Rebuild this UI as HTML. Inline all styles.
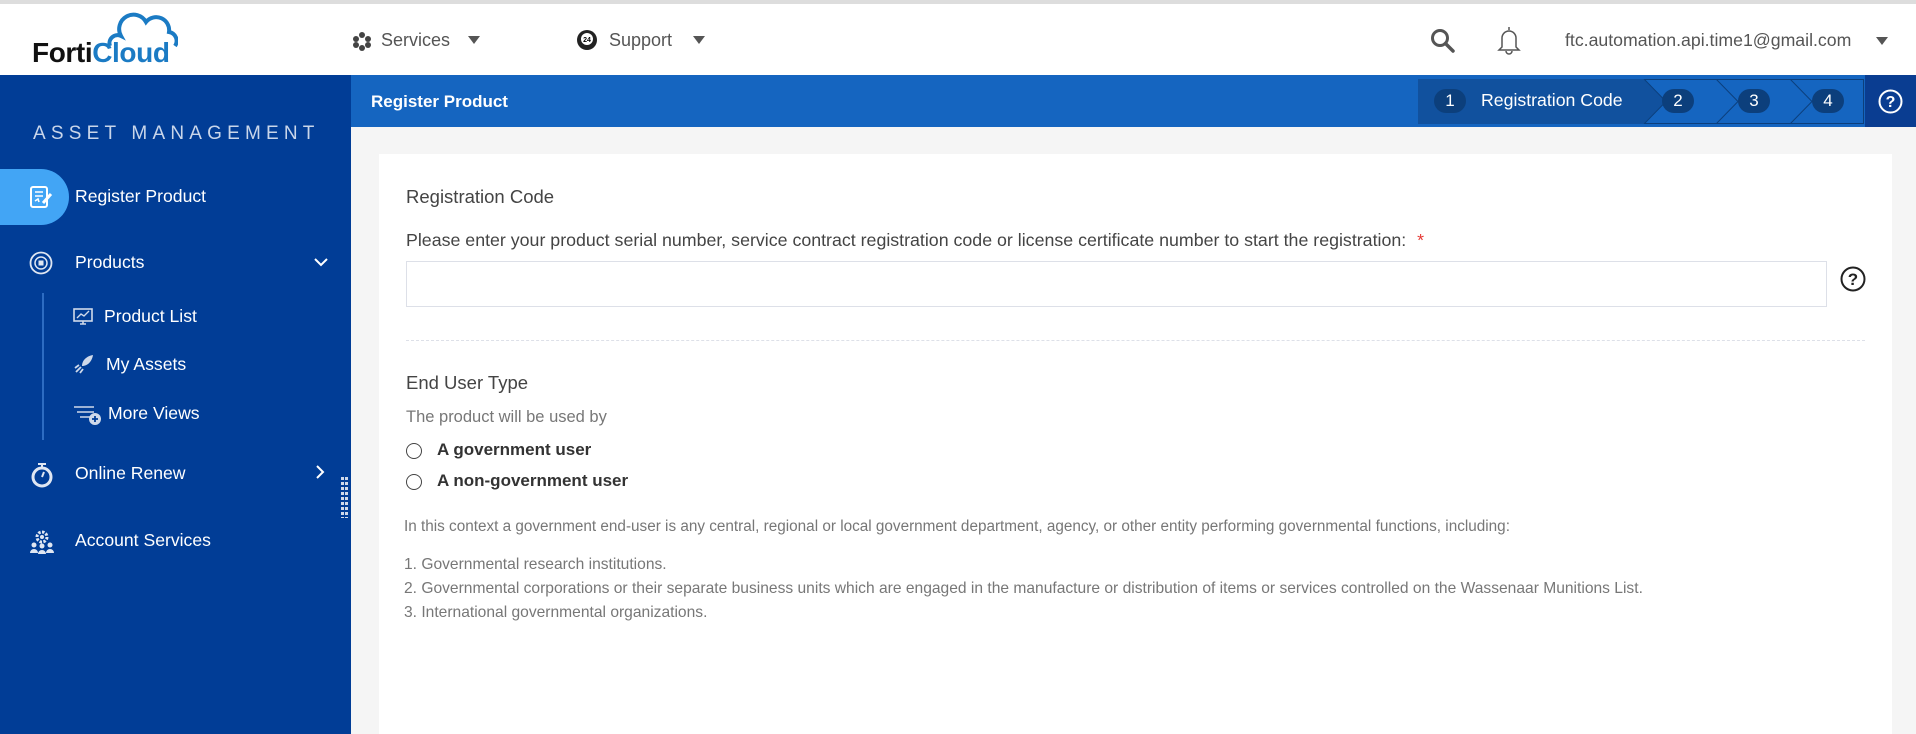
<!DOCTYPE html>
<html><head><meta charset="utf-8"><style>
*{margin:0;padding:0;box-sizing:border-box}
body{width:1916px;height:734px;overflow:hidden;font-family:"Liberation Sans",sans-serif;background:#f5f5f5;position:relative}
.a{position:absolute;white-space:nowrap}
#hdr{left:0;top:0;width:1916px;height:75px;background:#fff;border-top:4px solid #ddd}
#side{left:0;top:75px;width:351px;height:659px;background:#013d96}
#bar{left:351px;top:75px;width:1565px;height:52px;background:#1565c0}
.w{color:#fff}
.tri{width:0;height:0;border-left:6px solid transparent;border-right:6px solid transparent;border-top:8px solid #555}
.nav{color:#fff;font-size:17.6px}
.circ{width:32px;height:24px;border-radius:12px;background:#0c3f7c;color:#fff;font-size:17px;text-align:center;line-height:24px}
</style></head><body>
<div class="a" id="hdr"></div>
<!-- logo -->
<svg class="a" style="left:106px;top:12px" width="72" height="36" viewBox="0 0 72 36"><path d="M4 34 A8 8 0 0 1 15 24 A14 14 0 0 1 40 10 A13 13 0 0 1 63 20 A9 9 0 0 1 69 34" fill="none" stroke="#1b7bc4" stroke-width="4"/></svg>
<div class="a" style="left:32px;top:37px;font-size:28px;font-weight:bold;letter-spacing:-0.4px;color:#111">Forti<span style="color:#1b7bc4">Cloud</span></div>
<!-- services -->
<svg class="a" style="left:352px;top:31px" width="20" height="20" viewBox="0 0 20 20"><g fill="#444"><circle cx="10" cy="4" r="3"/><circle cx="4" cy="8" r="3"/><circle cx="16" cy="8" r="3"/><circle cx="4" cy="14" r="3"/><circle cx="16" cy="14" r="3"/><circle cx="10" cy="17" r="3"/></g></svg>
<div class="a" style="left:381px;top:30px;font-size:18px;color:#555">Services</div>
<div class="a tri" style="left:468px;top:36px"></div>
<svg class="a" style="left:576px;top:29px" width="22" height="22" viewBox="0 0 22 22"><circle cx="11" cy="11" r="10" fill="#222"/><circle cx="11" cy="10" r="6" fill="#fff"/><text x="11" y="13" font-size="7" text-anchor="middle" font-family="Liberation Sans" font-weight="bold">24</text></svg>
<div class="a" style="left:609px;top:30px;font-size:18px;color:#555">Support</div>
<div class="a tri" style="left:693px;top:36px"></div>
<!-- right header -->
<svg class="a" style="left:1430px;top:28px" width="26" height="26" viewBox="0 0 26 26"><circle cx="10" cy="10" r="7.5" fill="none" stroke="#555" stroke-width="3"/><path d="M15.5 15.5 L23 23" stroke="#555" stroke-width="3.5" stroke-linecap="round"/></svg>
<svg class="a" style="left:1497px;top:25px" width="24" height="30" viewBox="0 0 24 30"><path d="M12 2 V5 M5 22 V13 A7 7 0 0 1 19 13 V22 L22 25 H2 Z M9 26 A3 3 0 0 0 15 26" fill="none" stroke="#555" stroke-width="1.5"/></svg>
<div class="a" style="left:1565px;top:30px;font-size:17.7px;color:#555">ftc.automation.api.time1@gmail.com</div>
<div class="a tri" style="left:1876px;top:37px"></div>

<div class="a" id="side"></div>
<div class="a" id="bar"></div>
<div class="a w" style="left:371px;top:92px;font-size:17px;font-weight:bold">Register Product</div>
<!-- stepper -->
<div class="a" style="left:1418px;top:79px;width:446px;height:45px;border:1px solid #0c3f7c"></div>
<svg class="a" style="left:1418px;top:79px" width="446" height="45"><path d="M0 0 H226 L248 22.5 L226 45 H0Z" fill="#11519e"/><path d="M226 0 L248 22.5 L226 45 M298 0 L320 22.5 L298 45 M372 0 L394 22.5 L372 45" fill="none" stroke="#0c3f7c" stroke-width="1"/></svg>
<div class="a circ" style="left:1434px;top:89px">1</div>
<div class="a w" style="left:1481px;top:90px;font-size:17.7px">Registration Code</div>
<div class="a circ" style="left:1662px;top:89px">2</div>
<div class="a circ" style="left:1738px;top:89px">3</div>
<div class="a circ" style="left:1812px;top:89px">4</div>
<div class="a" style="left:1865px;top:75px;width:51px;height:52px;background:#0a3d91"></div>
<svg class="a" style="left:1878px;top:89px" width="25" height="25" viewBox="0 0 25 25"><circle cx="12.5" cy="12.5" r="11" fill="none" stroke="#fff" stroke-width="2"/><text x="12.5" y="18" font-size="16" font-weight="bold" text-anchor="middle" fill="#fff" font-family="Liberation Sans">?</text></svg>

<!-- sidebar -->
<div class="a" style="left:33px;top:123px;font-size:19px;letter-spacing:5.2px;color:#c9d6ea">ASSET MANAGEMENT</div>
<div class="a" style="left:0;top:169px;width:69px;height:56px;background:#42a5f5;border-radius:0 28px 28px 0"></div>
<svg class="a" style="left:29px;top:185px" width="24" height="24" viewBox="0 0 24 24"><rect x="2" y="2" width="16" height="20" rx="2" fill="none" stroke="#fff" stroke-width="2"/><path d="M6 7H14M6 11H14M6 16 L9 14 L10 17" stroke="#fff" stroke-width="1.6" fill="none"/><path d="M14 18 L22 9" stroke="#fff" stroke-width="3"/></svg>
<div class="a nav" style="left:75px;top:186px">Register Product</div>
<svg class="a" style="left:29px;top:251px" width="24" height="24" viewBox="0 0 24 24"><circle cx="12" cy="12" r="10.5" fill="none" stroke="#dfe6f2" stroke-width="1.8"/><circle cx="12" cy="12" r="6" fill="none" stroke="#dfe6f2" stroke-width="1.5"/><rect x="9.5" y="9.5" width="5" height="5" fill="#dfe6f2"/></svg>
<div class="a nav" style="left:75px;top:252px">Products</div>
<svg class="a" style="left:313px;top:256px" width="16" height="12"><path d="M2 3 L8 9 L14 3" fill="none" stroke="#fff" stroke-width="2"/></svg>
<div class="a" style="left:42px;top:293px;width:2px;height:147px;background:#2d6cc2"></div>
<svg class="a" style="left:73px;top:308px" width="20" height="18" viewBox="0 0 20 18"><rect x="1" y="1" width="18" height="12" fill="none" stroke="#cfd9ea" stroke-width="1.6"/><path d="M4 10 L8 6 L11 8 L16 3" fill="none" stroke="#cfd9ea" stroke-width="1.4"/><path d="M7 16H13M10 13V16" stroke="#cfd9ea" stroke-width="1.6"/></svg>
<div class="a nav" style="left:104px;top:306px">Product List</div>
<svg class="a" style="left:74px;top:354px" width="20" height="20" viewBox="0 0 20 20"><path d="M8 12 C8 6 13 2 19 1 C18 7 14 12 8 12Z" fill="#cfd9ea"/><path d="M2 18 L7 13 M1 14 L5 11 M6 19 L9 15" stroke="#cfd9ea" stroke-width="1.8"/></svg>
<div class="a nav" style="left:106px;top:354px">My Assets</div>
<svg class="a" style="left:74px;top:405px" width="28" height="20" viewBox="0 0 28 20"><path d="M0 2H20M3 7H20M6 12H16" stroke="#cfd9ea" stroke-width="1.6"/><circle cx="21" cy="14" r="6" fill="#cfd9ea"/><path d="M21 11V17M18 14H24" stroke="#013d96" stroke-width="1.8"/></svg>
<div class="a nav" style="left:108px;top:403px">More Views</div>
<svg class="a" style="left:30px;top:462px" width="24" height="26" viewBox="0 0 24 26"><path d="M8 2H16M12 2V6" stroke="#dfe6f2" stroke-width="2"/><circle cx="12" cy="15" r="9" fill="none" stroke="#dfe6f2" stroke-width="3"/><path d="M12 15 L14 10" stroke="#dfe6f2" stroke-width="2"/></svg>
<div class="a nav" style="left:75px;top:463px">Online Renew</div>
<svg class="a" style="left:314px;top:464px" width="12" height="16"><path d="M3 2 L9 8 L3 14" fill="none" stroke="#fff" stroke-width="2"/></svg>
<div class="a" style="left:341px;top:477px;width:7px;height:41px;background:repeating-linear-gradient(#cfd9ea 0 3px,transparent 3px 5px);-webkit-mask:repeating-linear-gradient(90deg,#000 0 3px,transparent 3px 4px)"></div>
<svg class="a" style="left:29px;top:530px" width="26" height="24" viewBox="0 0 26 24"><circle cx="13" cy="7" r="5" fill="none" stroke="#dfe6f2" stroke-width="3" stroke-dasharray="2.5 1.4"/><circle cx="13" cy="7" r="2" fill="#dfe6f2"/><circle cx="5" cy="15" r="2.5" fill="#dfe6f2"/><circle cx="13" cy="16" r="2.5" fill="#dfe6f2"/><circle cx="21" cy="15" r="2.5" fill="#dfe6f2"/><path d="M1 23 A4 4 0 0 1 9 23ZM9 24 A4 4 0 0 1 17 24ZM17 23 A4 4 0 0 1 25 23Z" fill="#dfe6f2"/></svg>
<div class="a nav" style="left:75px;top:530px">Account Services</div>

<!-- content -->
<div class="a" style="left:379px;top:154px;width:1513px;height:580px;background:#fff"></div>
<div class="a" style="left:406px;top:186px;font-size:18.5px;color:#444">Registration Code</div>
<div class="a" style="left:406px;top:230px;font-size:17.8px;color:#444">Please enter your product serial number, service contract registration code or license certificate number to start the registration: <span style="color:#e53935;margin-left:6px">*</span></div>
<div class="a" style="left:406px;top:261px;width:1421px;height:46px;border:1.5px solid #dde0e8;background:#fff"></div>
<svg class="a" style="left:1840px;top:266px" width="26" height="26" viewBox="0 0 26 26"><circle cx="13" cy="13" r="11.5" fill="none" stroke="#222" stroke-width="2"/><text x="13" y="19" font-size="17" font-weight="bold" text-anchor="middle" fill="#222" font-family="Liberation Sans">?</text></svg>
<div class="a" style="left:406px;top:340px;width:1459px;border-top:1px dashed #dde0e8"></div>
<div class="a" style="left:406px;top:372px;font-size:18.5px;color:#444">End User Type</div>
<div class="a" style="left:406px;top:408px;font-size:16.5px;color:#777">The product will be used by</div>
<div class="a" style="left:406px;top:443px;width:16px;height:16px;border:1.3px solid #444;border-radius:50%"></div>
<div class="a" style="left:437px;top:440px;font-size:17px;font-weight:bold;color:#333">A government user</div>
<div class="a" style="left:406px;top:474px;width:16px;height:16px;border:1.3px solid #444;border-radius:50%"></div>
<div class="a" style="left:437px;top:471px;font-size:17px;font-weight:bold;color:#333">A non-government user</div>
<div class="a" style="left:404px;top:518px;font-size:15.3px;color:#777">In this context a government end-user is any central, regional or local government department, agency, or other entity performing governmental functions, including:</div>
<div class="a" style="left:404px;top:553px;font-size:15.6px;color:#777;line-height:23.8px">1. Governmental research institutions.<br>2. Governmental corporations or their separate business units which are engaged in the manufacture or distribution of items or services controlled on the Wassenaar Munitions List.<br>3. International governmental organizations.</div>
</body></html>
